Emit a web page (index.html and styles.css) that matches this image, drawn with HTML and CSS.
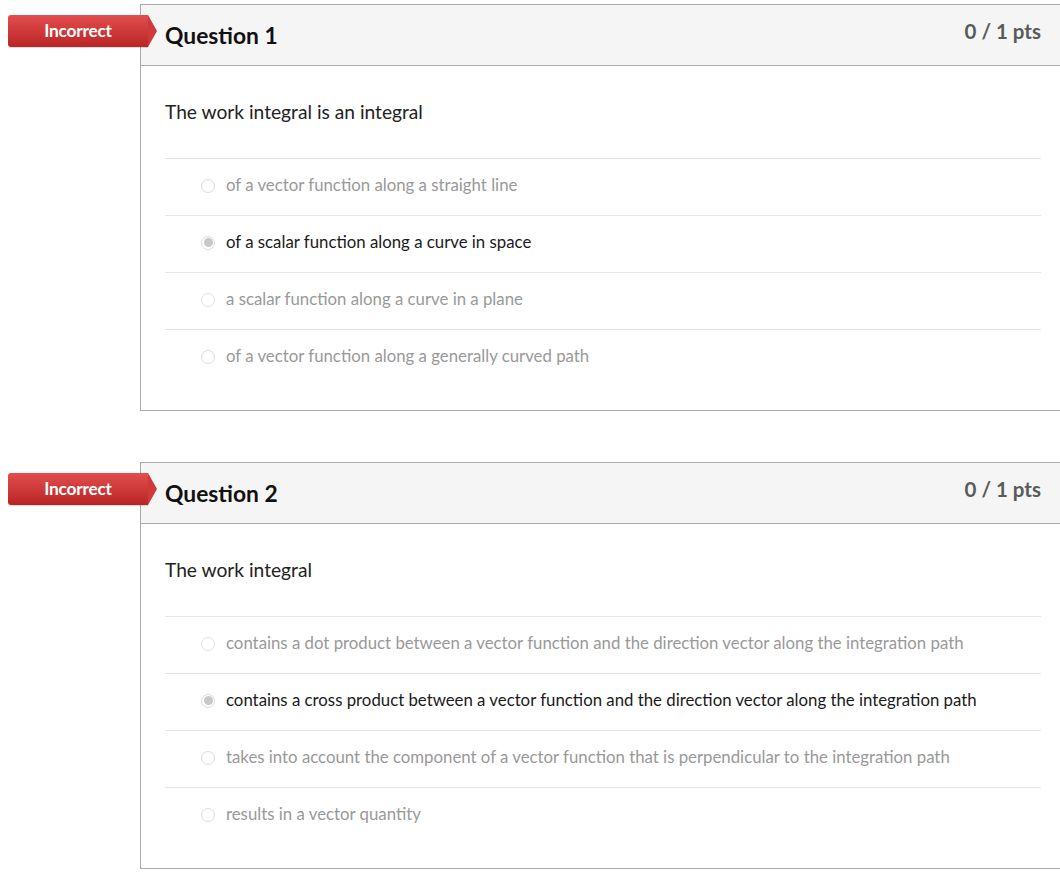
FILE: index.html
```html
<!DOCTYPE html>
<html>
<head>
<meta charset="utf-8">
<link rel="stylesheet" href="styles.css">
</head>
<body>
<div class="page">
  <div class="question">
    <div class="badge">Incorrect</div>
    <div class="header">
      <span class="title">Question 1</span>
      <span class="pts">0 / 1 pts</span>
    </div>
    <div class="body">
      <div class="qtext">The work integral is an integral</div>
      <div class="answers">
        <div class="answer"><span class="radio"></span><span class="label">of a vector function along a straight line</span></div>
        <div class="answer selected"><span class="radio"></span><span class="label">of a scalar function along a curve in space</span></div>
        <div class="answer"><span class="radio"></span><span class="label">a scalar function along a curve in a plane</span></div>
        <div class="answer"><span class="radio"></span><span class="label">of a vector function along a generally curved path</span></div>
      </div>
    </div>
  </div>
  <div class="question">
    <div class="badge">Incorrect</div>
    <div class="header">
      <span class="title">Question 2</span>
      <span class="pts">0 / 1 pts</span>
    </div>
    <div class="body">
      <div class="qtext">The work integral</div>
      <div class="answers">
        <div class="answer"><span class="radio"></span><span class="label">contains a dot product between a vector function and the direction vector along the integration path</span></div>
        <div class="answer selected"><span class="radio"></span><span class="label">contains a cross product between a vector function and the direction vector along the integration path</span></div>
        <div class="answer"><span class="radio"></span><span class="label">takes into account the component of a vector function that is perpendicular to the integration path</span></div>
        <div class="answer"><span class="radio"></span><span class="label">results in a vector quantity</span></div>
      </div>
    </div>
  </div>
</div>
</body>
</html>
```
FILE: styles.css
```css
html, body {
  margin: 0;
  padding: 0;
  background: #fff;
}
body {
  font-family: Lato, "Open Sans", "Liberation Sans", sans-serif;
  color: #222;
  overflow: hidden;
}
.page {
  padding: 4px 0 0 140px;
  display: flex;
  flex-direction: column;
  gap: 51px;
  width: 922px;
}
.question {
  position: relative;
  border: 1px solid #aaa;
  background: #fff;
}
.badge {
  position: absolute;
  left: -133px;
  top: 10px;
  width: 140px;
  height: 32px;
  line-height: 31px;
  text-align: center;
  color: #fff;
  font-weight: bold;
  font-size: 17.3px;
  letter-spacing: -0.2px;
  background: linear-gradient(#e34d4d, #b92525);
  border-radius: 3px 0 0 3px;
  box-shadow: 0 1px 1px rgba(0,0,0,0.15);
}
.badge::after {
  content: "";
  position: absolute;
  right: -9px;
  top: 0;
  width: 0;
  height: 0;
  border-top: 16px solid transparent;
  border-bottom: 16px solid transparent;
  border-left: 9px solid #cf3939;
}
.header {
  height: 60px;
  background: #f5f5f5;
  border-bottom: 1px solid #aaa;
  display: flex;
  justify-content: space-between;
  align-items: flex-start;
  padding: 0 20px 0 24px;
}
.title {
  font-size: 22.8px;
  font-weight: bold;
  color: #111;
  margin-top: 16px;
}
.pts {
  font-size: 20.5px;
  font-weight: bold;
  color: #5a5a5a;
  margin-top: 14px;
}
.body {
  padding: 33px 20px 24px 24px;
}
.qtext {
  font-size: 19.2px;
  line-height: 26px;
  color: #222;
  margin-bottom: 33px;
}
.answer {
  box-sizing: border-box;
  height: 57px;
  border-top: 1px solid #e6e6e6;
  display: flex;
  align-items: center;
  padding: 0 0 5px 36px;
  font-size: 16.8px;
  color: #999;
}
.answer.selected {
  color: #1a1a1a;
}
.radio {
  width: 12px;
  height: 12px;
  border: 1px solid #ddd;
  border-radius: 50%;
  background: #fff;
  margin-right: 11px;
  margin-top: 2px;
  position: relative;
  flex: none;
}
.answer.selected .radio::after {
  content: "";
  position: absolute;
  left: 1.5px;
  top: 1.5px;
  width: 9px;
  height: 9px;
  border-radius: 50%;
  background: #c8c8c8;
}
```
